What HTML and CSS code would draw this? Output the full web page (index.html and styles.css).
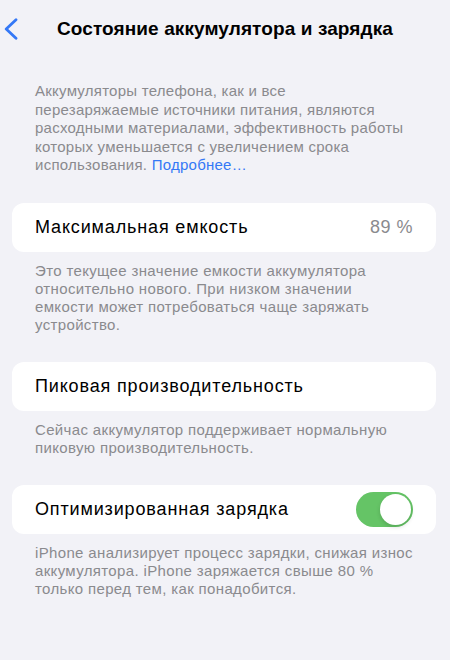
FILE: index.html
```html
<!DOCTYPE html>
<html lang="ru">
<head>
  <meta charset="UTF-8">
  <title>Состояние аккумулятора и зарядка</title>
  <link rel="stylesheet" href="styles.css">
</head>
<body>
  <div class="screen">
    <!-- верхняя панель -->
    <header class="nav-bar">
      <button class="back-btn" aria-label="Назад">
        <svg width="14" height="22" viewBox="0 0 14 22">
          <path d="M12 1.8 L2.2 11 L12 20.2" fill="none" stroke="#3478f6" stroke-width="2.8" stroke-linecap="round" stroke-linejoin="round"/>
        </svg>
      </button>
      <h1 class="nav-title">Состояние аккумулятора и зарядка</h1>
    </header>

    <p class="intro">
      Аккумуляторы телефона, как и все перезаряжаемые источники питания, являются расходными материалами, эффективность работы которых уменьшается с увеличением срока использования. <a href="#" class="link">Подробнее…</a>
    </p>

    <!-- максимальная емкость -->
    <section class="group">
      <div class="cell">
        <span class="cell-label">Максимальная емкость</span>
        <span class="cell-value">89 %</span>
      </div>
      <p class="footer">Это текущее значение емкости аккумулятора относительно нового. При низком значении емкости может потребоваться чаще заряжать устройство.</p>
    </section>

    <!-- пиковая производительность -->
    <section class="group">
      <div class="cell">
        <span class="cell-label">Пиковая производительность</span>
      </div>
      <p class="footer">Сейчас аккумулятор поддерживает нормальную пиковую производительность.</p>
    </section>

    <!-- оптимизированная зарядка -->
    <section class="group">
      <div class="cell">
        <span class="cell-label">Оптимизированная зарядка</span>
        <span class="switch on"><span class="knob"></span></span>
      </div>
      <p class="footer">iPhone анализирует процесс зарядки, снижая износ аккумулятора. iPhone заряжается свыше 80&nbsp;% только перед тем, как понадобится.</p>
    </section>
  </div>
</body>
</html>
```

FILE: styles.css
```css
/* базовые стили */
* { margin: 0; padding: 0; box-sizing: border-box; }
html, body {
  background: #f2f2f7;
}
body {
  font-family: "Liberation Sans", Arial, sans-serif;
  color: #000;
  -webkit-font-smoothing: antialiased;
}
.screen {
  width: 450px;
  min-height: 660px;
  padding: 0 14px 0 12px;
}
/* верхняя панель */
.nav-bar {
  height: 57px;
  display: flex;
  align-items: center;
}
.back-btn {
  background: none;
  border: none;
  width: 14px;
  height: 22px;
  margin-left: -8px;
  display: flex;
  cursor: pointer;
}
.nav-title {
  margin-left: 39px;
  font-size: 19px;
  font-weight: 600;
  letter-spacing: 0.1px;
  white-space: nowrap;
}
/* пояснительный текст */
.intro,
.footer {
  color: #8a8a8e;
  font-size: 15px;
}
.intro {
  margin-top: 25px;
  line-height: 18.5px;
  letter-spacing: 0.25px;
  padding: 0 31px 0 23px;
}
.footer {
  margin-top: 10px;
  line-height: 18px;
  letter-spacing: 0.35px;
  padding: 0 23px;
}
.link {
  color: #3478f6;
  text-decoration: none;
}
/* группы ячеек */
.group {
  margin-top: 28px;
}
.cell {
  background: #fff;
  border-radius: 12px;
  height: 49px;
  display: flex;
  align-items: center;
  justify-content: space-between;
  padding: 0 23px;
}
.cell-label,
.cell-value {
  font-size: 18px;
  letter-spacing: 0.85px;
}
.cell-value {
  color: #8a8a8e;
  letter-spacing: 0.5px;
}
/* переключатель */
.switch {
  width: 57px;
  height: 35px;
  border-radius: 18px;
  background: #e9e9eb;
  display: flex;
  align-items: center;
  padding: 2px;
}
.switch.on {
  background: #65c466;
  justify-content: flex-end;
}
.knob {
  width: 31px;
  height: 31px;
  border-radius: 50%;
  background: #fff;
  box-shadow: 0 2px 4px rgba(0, 0, 0, 0.15);
}
```
